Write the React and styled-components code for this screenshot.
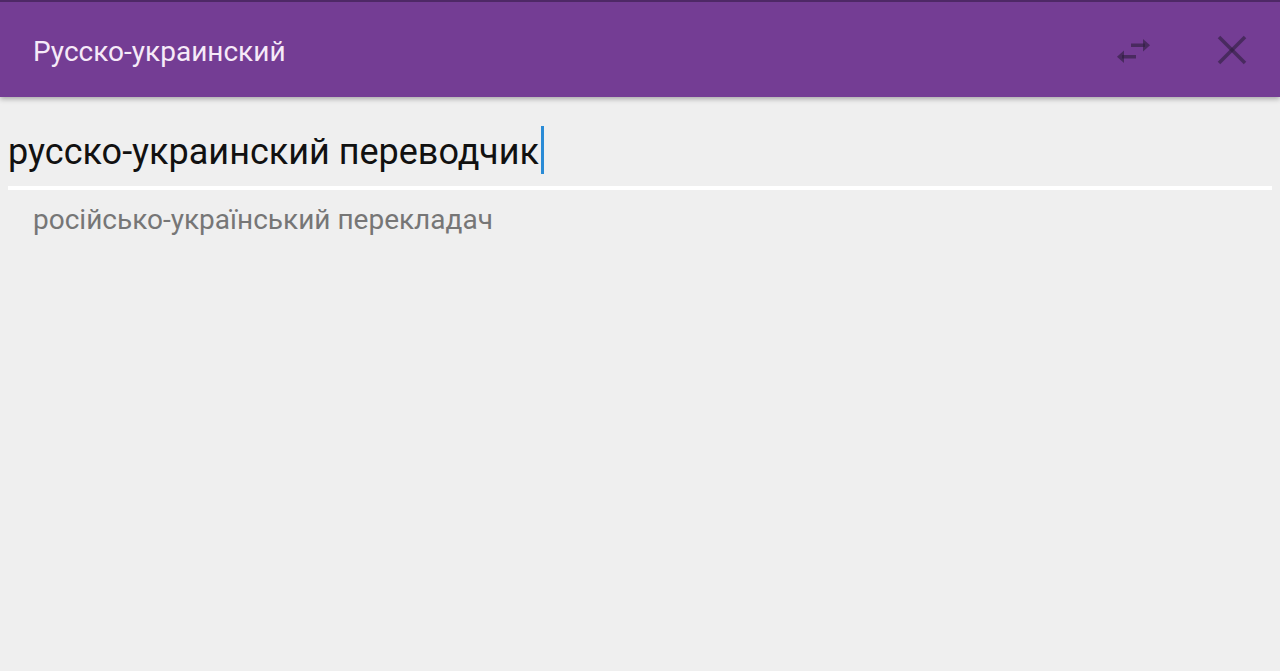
import React from 'react';
import styled, { createGlobalStyle } from 'styled-components';

const GlobalStyle = createGlobalStyle`
  html, body {
    margin: 0;
    padding: 0;
    background: #efefef;
    font-family: Roboto, "Noto Sans", sans-serif;
  }
`;

const Page = styled.div`
  width: 1280px;
  height: 671px;
  display: flex;
  flex-direction: column;
  background: #efefef;
  overflow: hidden;
`;

const Toolbar = styled.header`
  box-sizing: border-box;
  height: 97px;
  display: flex;
  align-items: center;
  padding: 0 0 0 33px;
  background: #743d94;
  border-top: 2px solid #4e2866;
  box-shadow: 0 2px 5px rgba(0, 0, 0, 0.3);
  position: relative;
  z-index: 1;
`;

const Title = styled.h1`
  flex: 1;
  margin: 0;
  padding-top: 3px;
  font-size: 28px;
  font-weight: 400;
  color: #f6eaf8;
`;

const IconButton = styled.button`
  width: ${props => props.width || '96px'};
  height: 96px;
  display: flex;
  align-items: center;
  justify-content: center;
  padding: 0;
  border: none;
  background: transparent;
  color: rgba(45, 30, 60, 0.6);
`;

const Content = styled.main`
  display: flex;
  flex-direction: column;
  padding: 24px 8px 0 8px;
`;

const InputRow = styled.div`
  display: flex;
  align-items: center;
  height: 58px;
`;

const InputText = styled.span`
  font-size: 36px;
  color: #111;
  white-space: nowrap;
  padding-top: 4px;
`;

const Caret = styled.span`
  display: inline-block;
  width: 3px;
  height: 48px;
  margin-left: 2px;
  background: #2a8bd6;
`;

const Divider = styled.div`
  height: 4px;
  margin-top: 7px;
  background: #ffffff;
`;

const Suggestion = styled.div`
  padding: 13px 0 0 25px;
  font-size: 28px;
  color: #767676;
`;

const SwapIcon = () => (
  <svg width="40" height="32" viewBox="0 0 40 32" fill="currentColor">
    <rect x="19" y="9.5" width="14" height="3.5" />
    <polygon points="31,5 38,11.25 31,17.5" />
    <rect x="10" y="21" width="14" height="3.5" />
    <polygon points="12,16.5 5,22.75 12,29" />
  </svg>
);

const CloseIcon = () => (
  <svg width="32" height="32" viewBox="0 0 32 32" stroke="currentColor" strokeWidth="3.5">
    <line x1="3" y1="3" x2="29" y2="29" />
    <line x1="29" y1="3" x2="3" y2="29" />
  </svg>
);

export default function App() {
  return (
    <Page>
      <GlobalStyle />
      <Toolbar>
        <Title>Русско-украинский</Title>
        <IconButton width="104px">
          <SwapIcon />
        </IconButton>
        <IconButton>
          <CloseIcon />
        </IconButton>
      </Toolbar>
      <Content>
        <InputRow>
          <InputText>русско-украинский переводчик</InputText>
          <Caret />
        </InputRow>
        <Divider />
        <Suggestion>російсько-український перекладач</Suggestion>
      </Content>
    </Page>
  );
}
